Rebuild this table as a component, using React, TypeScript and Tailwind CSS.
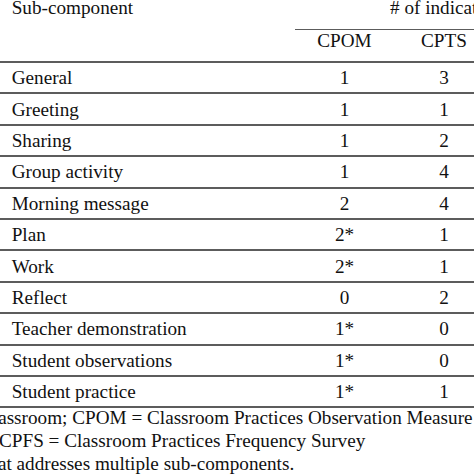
import React from "react";

interface Row {
  name: string;
  cpom: string;
  cpts: string;
}

const rows: Row[] = [
  { name: "General", cpom: "1", cpts: "3" },
  { name: "Greeting", cpom: "1", cpts: "1" },
  { name: "Sharing", cpom: "1", cpts: "2" },
  { name: "Group activity", cpom: "1", cpts: "4" },
  { name: "Morning message", cpom: "2", cpts: "4" },
  { name: "Plan", cpom: "2*", cpts: "1" },
  { name: "Work", cpom: "2*", cpts: "1" },
  { name: "Reflect", cpom: "0", cpts: "2" },
  { name: "Teacher demonstration", cpom: "1*", cpts: "0" },
  { name: "Student observations", cpom: "1*", cpts: "0" },
  { name: "Student practice", cpom: "1*", cpts: "1" },
];

function Rule() {
  return <div className="h-[2px] w-full bg-[#5c5c5c]" />;
}

export default function App() {
  return (
    <div className="h-[474px] w-[474px] overflow-hidden bg-white font-['Liberation_Serif','Times_New_Roman',serif] text-[19.2px] leading-[21px] text-[#111]">
      {/* Header */}
      <div className="flex h-[28.5px] items-start whitespace-nowrap">
        <div className="-mt-[3.5px] w-[295px] shrink-0 pl-[11.7px]">Sub-component</div>
        <div className="-mt-[3.5px] shrink-0 pl-[95px]"># of indicators</div>
      </div>
      <div className="ml-[295px] h-[1.5px] bg-[#5c5c5c]" />
      <div className="flex h-[31px] items-start whitespace-nowrap">
        <div className="w-[295px] shrink-0" />
        <div className="w-[99px] shrink-0 text-center">CPOM</div>
        <div className="w-[100px] shrink-0 text-center">CPTS</div>
      </div>
      <Rule />

      {/* Body */}
      {rows.map((row) => (
        <div key={row.name}>
          <div className="flex h-[29.4px] items-center whitespace-nowrap">
            <div className="w-[295px] shrink-0 pl-[11.7px]">{row.name}</div>
            <div className="w-[99px] shrink-0 text-center">{row.cpom}</div>
            <div className="w-[100px] shrink-0 text-center">{row.cpts}</div>
          </div>
          <Rule />
        </div>
      ))}

      {/* Notes */}
      <div className="-mt-[2px] whitespace-nowrap leading-[23px]">
        <div className="-ml-[20px]">Classroom; CPOM = Classroom Practices Observation Measure</div>
        <div className="-ml-[1px]">CPFS = Classroom Practices Frequency Survey</div>
        <div className="-ml-[17px]">that addresses multiple sub-components.</div>
      </div>
    </div>
  );
}
